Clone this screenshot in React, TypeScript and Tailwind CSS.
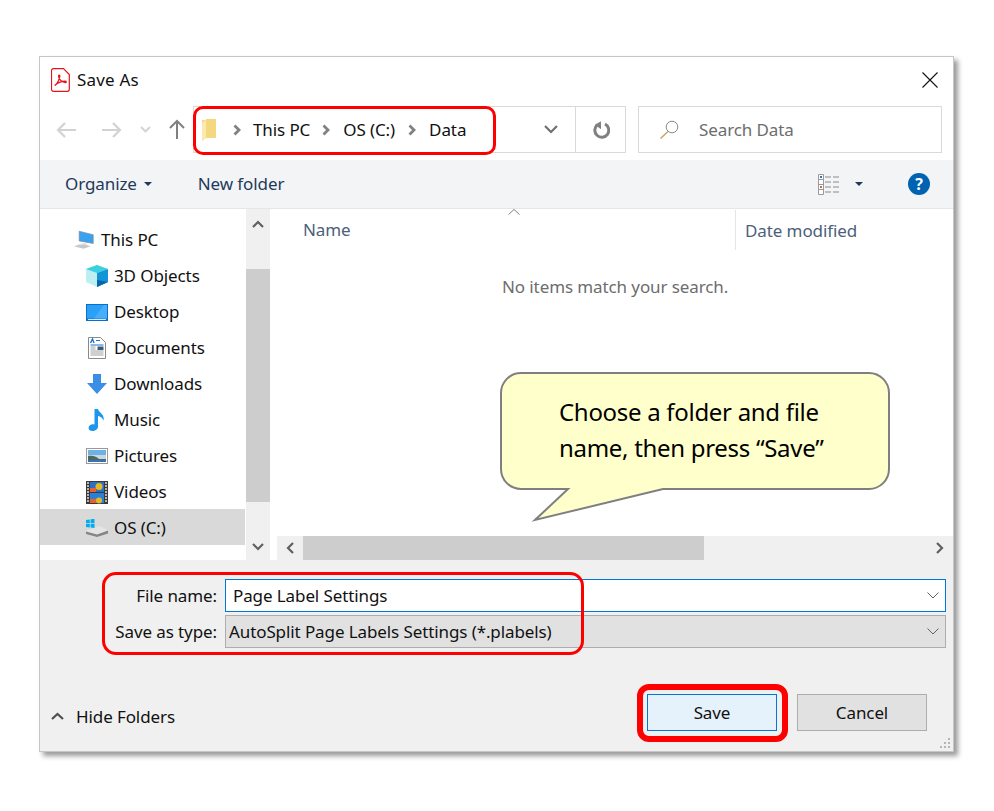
import { ReactNode } from "react";

const Chev = ({ className = "" }: { className?: string }) => (
  <svg width="8" height="12" viewBox="0 0 8 12" className={className}>
    <path d="M1.500 1.500 6 6l-4.500 4.500" fill="none" stroke="#808080" strokeWidth="2.800" />
  </svg>
);

function PdfIcon() {
  return (
    <svg width="19" height="24" viewBox="0 0 19 24">
      <path d="M2.500.7h10l5.800 5.800v14.800a2 2 0 0 1-2 2H2.500a2 2 0 0 1-2-2V2.700a2 2 0 0 1 2-2z" fill="#fff" stroke="#e8141c" strokeWidth="1.200" />
      <path d="M3.800 17.500c2.200-1.200 4.500-5.800 5-9.300.1-1.300-1.100-1.500-1.200-.3-.2 2.700 2.800 6.400 6.600 6.600 1.500.1 1.400-1.300-.1-1.300-3.100 0-8.200 1.500-10.300 4.300z" fill="none" stroke="#e8141c" strokeWidth="1.300" />
    </svg>
  );
}

function PcIcon() {
  return (
    <svg width="25" height="22" viewBox="0 0 25 22">
      <path d="M7 1l16 4v10L7 12z" fill="#3aa0f0" stroke="#7a8a99" strokeWidth=".7" />
      <path d="M1 18l10-3 9 3-8 3z" fill="#c4c8cc" />
      <path d="M5 16l9-2 3 1-9 2z" fill="#e4e6e8" />
    </svg>
  );
}

function CubeIcon() {
  return (
    <svg width="22" height="22" viewBox="0 0 22 22">
      <path d="M11 0l11 4v13l-11 5-11-5V4z" fill="#bdeef2" />
      <path d="M11 0l11 4-11 4L0 4z" fill="#3bd0e0" />
      <path d="M11 8l11-4v13l-11 5z" fill="#1195d8" />
      <path d="M11 15l11 2-11 5z" fill="#0b66a8" />
    </svg>
  );
}

function DesktopIcon() {
  return (
    <svg width="22" height="17" viewBox="0 0 22 17">
      <rect width="22" height="17" fill="#0b6fc8" />
      <rect x="1" y="1" width="20" height="13.500" fill="#2ba0f7" />
      <path d="M8 14.500 18 1h3v13.500z" fill="#49aef9" />
      <rect x="2" y="15" width="18" height="1" fill="#cfe7fb" />
    </svg>
  );
}

function DocIcon() {
  return (
    <svg width="18" height="22" viewBox="0 0 18 22">
      <path d="M.5.500h12l5 5v16H.5z" fill="#fff" stroke="#8a8a8a" />
      <path d="M2.500 6 4.500 2 6 6" fill="none" stroke="#1a73d2" strokeWidth="1.400" />
      <path d="M8 3.500h4M2.500 8h13" stroke="#1a73d2" />
      <path d="M2.500 10h5M2.500 12h5M2.500 14h13M2.500 16h13M2.500 18h13" stroke="#a0a0a0" />
      <rect x="9.500" y="9.500" width="6" height="3.500" fill="#3a5a80" />
    </svg>
  );
}

function DownloadIcon() {
  return (
    <svg width="20" height="20" viewBox="0 0 20 20">
      <path d="M6 0h8v9h6L10 20 0 9h6z" fill="#3b8ee6" />
    </svg>
  );
}

function MusicIcon() {
  return (
    <svg width="18" height="22" viewBox="0 0 18 22">
      <path d="M6.500 0h3.500c.5 3.500 7 5 5.500 11.500-1-2.500-3-4-5.500-4.500V17.500c0 2.800-3 4.500-5.500 4.500-3.500 0-5-3-3-5.200 1.200-1.300 3-1.800 5-1.300z" fill="#1e96ee" />
    </svg>
  );
}

function PicturesIcon() {
  return (
    <svg width="22" height="16" viewBox="0 0 22 16">
      <rect x=".5" y=".5" width="21" height="15" fill="#fff" stroke="#9a9a9a" />
      <rect x="2" y="2" width="18" height="5" fill="#6fb0e8" />
      <rect x="2" y="7" width="18" height="4" fill="#c8d8e0" />
      <path d="M2 8c5-1 9 1 11 3h7v3H2z" fill="#4a6a60" />
      <rect x="2" y="12" width="18" height="2" fill="#3a70b8" />
    </svg>
  );
}

function VideosIcon() {
  return (
    <svg width="22" height="23" viewBox="0 0 22 23">
      <rect width="22" height="23" fill="#3a3a3a" />
      <rect x="4" y="1" width="14" height="10" fill="#2a70c8" />
      <rect x="4" y="12" width="14" height="10" fill="#2a80d8" />
      <rect x="4" y="7" width="6" height="4" fill="#e8602a" />
      <rect x="4" y="18" width="6" height="4" fill="#e8602a" />
      <circle cx="13" cy="5.500" r="3.500" fill="#e8b820" />
      <circle cx="13" cy="19.500" r="3" fill="#e8b820" />
      <path d="M1 2h2M1 5h2M1 8h2M1 11h2M1 14h2M1 17h2M1 20h2M19 2h2M19 5h2M19 8h2M19 11h2M19 14h2M19 17h2M19 20h2" stroke="#e0e0e0" strokeWidth="1.500" />
    </svg>
  );
}

function DriveIcon() {
  return (
    <svg width="22" height="18" viewBox="0 0 22 18">
      <path d="M0 12l13-5 9 4v3l-11 4-11-3z" fill="#e4e4e4" />
      <path d="M0 12.500l11 3 11-4v3l-11 3.500-11-3z" fill="#858585" />
      <path d="M0 1l3.800-.6V4H0zM4.600.3 8.500-.2V4H4.600zM0 4.800h3.800v3.600L0 8zM4.600 4.800h3.900V9l-3.900-.5z" fill="#00adef" />
    </svg>
  );
}

const navItems: { label: string; icon: ReactNode; selected?: boolean; top?: boolean }[] = [
  { label: "This PC", icon: <PcIcon />, top: true },
  { label: "3D Objects", icon: <CubeIcon /> },
  { label: "Desktop", icon: <DesktopIcon /> },
  { label: "Documents", icon: <DocIcon /> },
  { label: "Downloads", icon: <DownloadIcon /> },
  { label: "Music", icon: <MusicIcon /> },
  { label: "Pictures", icon: <PicturesIcon /> },
  { label: "Videos", icon: <VideosIcon /> },
  { label: "OS (C:)", icon: <DriveIcon />, selected: true },
];

function ArrowH({ flip, color }: { flip?: boolean; color: string }) {
  return (
    <svg width="20" height="16" viewBox="0 0 20 16" className={flip ? "scale-x-[-1]" : ""}>
      <path d="M20 8H2M9 1 2 8l7 7" fill="none" stroke={color} strokeWidth="2.200" />
    </svg>
  );
}

const ThinChevron = () => (
  <svg width="12" height="7" viewBox="0 0 12 7">
    <path d="M.5.500 6 6 11.500.500" fill="none" stroke="#606060" />
  </svg>
);

export default function App() {
  return (
    <div className="min-h-[811px] bg-white pt-[56px] pl-[39px] font-['Noto_Sans',sans-serif] text-[17px] tracking-[-0.1px] text-[#111]">
      <div className="relative flex h-[696px] w-[915px] flex-col border border-[#c6c6c6] bg-white shadow-[4px_4px_5px_rgba(0,0,0,0.4)]">
        {/* title bar */}
        <div className="flex h-[46px] shrink-0 items-center pl-[11px] pr-[15px]">
          <PdfIcon />
          <span className="ml-[7px] tracking-[0.2px] text-[#111]">Save As</span>
          <svg width="16" height="16" viewBox="0 0 16 16" className="ml-auto">
            <path d="M.5.500l15 15M15.500.500l-15 15" stroke="#111" strokeWidth="1.100" />
          </svg>
        </div>

        {/* address row */}
        <div className="flex h-[57px] shrink-0 items-start pt-[3px]">
          <div className="flex h-[47px] w-[153px] items-center pl-[16px]">
            <ArrowH color="#d2d2d2" />
            <span className="ml-[26px]"><ArrowH flip color="#d2d2d2" /></span>
            <svg width="11" height="7" viewBox="0 0 11 7" className="ml-[18px]">
              <path d="M1 1l4.500 4.500L10 1" fill="none" stroke="#d2d2d2" strokeWidth="1.800" />
            </svg>
            <svg width="16" height="21" viewBox="0 0 16 21" className="ml-[18px]">
              <path d="M8 20V2M1 9l7-7 7 7" fill="none" stroke="#808080" strokeWidth="2" />
            </svg>
          </div>
          <div className="flex h-[47px] w-[433px] items-center border border-[#d9d9d9]">
            <svg width="15" height="22" viewBox="0 0 15 22" className="ml-[8px]">
              <path d="M0 1h4v-1h10v19H4l-4 3z" fill="#f5d77f" />
              <path d="M0 4l4-3v18l-4 3z" fill="#fbe9ad" />
            </svg>
            <Chev className="ml-[16px]" />
            <span className="ml-[12px]">This PC</span>
            <Chev className="ml-[12px]" />
            <span className="ml-[13px]">OS (C:)</span>
            <Chev className="ml-[13px]" />
            <span className="ml-[13px]">Data</span>
            <svg width="14" height="9" viewBox="0 0 14 9" className="ml-auto mr-[17px]">
              <path d="M1 1l6 6 6-6" fill="none" stroke="#707070" strokeWidth="2.200" />
            </svg>
            <div className="flex h-full w-[50px] items-center justify-center border-l border-[#d9d9d9]">
              <svg width="18" height="18" viewBox="0 0 18 18">
                <path d="M5.500 3.700A7 7 0 1 0 13 3" fill="none" stroke="#808080" strokeWidth="3" />
                <path d="M9 .2v8L3 3.800z" fill="#808080" />
              </svg>
            </div>
          </div>
          <div className="ml-[12px] flex h-[47px] w-[304px] items-center border border-[#d9d9d9] text-[#6d6d6d]">
            <svg width="19" height="19" viewBox="0 0 19 19" className="ml-[21px]">
              <circle cx="12" cy="7" r="5.800" fill="none" stroke="#8a8a8a" />
              <path d="M8 11.500.5 18.500" stroke="#c89a58" strokeWidth="1.200" />
            </svg>
            <span className="ml-[20px]">Search Data</span>
          </div>
        </div>

        {/* toolbar */}
        <div className="flex h-[49px] shrink-0 items-center border-b border-[#e6e6e6] bg-[#f3f4f6] pl-[25px] text-[#1e395b]">
          <span>Organize</span>
          <span className="ml-[7px] h-0 w-0 border-x-[4px] border-t-[4px] border-x-transparent border-t-[#1e395b]" />
          <span className="ml-[46px]">New folder</span>
          <svg width="22" height="21" viewBox="0 0 22 21" className="ml-auto">
            <path d="M.5.500h5v20h-5zM.5 5.500h5M.5 10.500h5M.5 15.500h5" fill="#fff" stroke="#9a9a9a" />
            <path d="M7 3h6M15 3h6M7 8h6M15 8h6M7 13h6M15 13h6M7 18h6M15 18h6" stroke="#8a8a8a" />
            <rect x="2" y="2" width="2" height="2" fill="#3a70b8" />
            <rect x="2" y="12" width="2" height="2" fill="#d8702a" />
          </svg>
          <span className="ml-[15px] h-0 w-0 border-x-[4px] border-t-[4px] border-x-transparent border-t-[#1e395b]" />
          <div className="ml-[45px] mr-[23px] flex h-[22px] w-[22px] items-center justify-center rounded-full bg-[#0063b1] text-[16px] font-bold leading-none text-white">?</div>
        </div>

        {/* main */}
        <div className="flex h-[351px] shrink-0">
          <div className="w-[205px] shrink-0 pt-[12px]">
            {navItems.map((item) => (
              <div key={item.label} className={`flex h-[36px] items-center pt-[2px] ${item.selected ? "bg-[#d9d9d9]" : ""} ${item.top ? "pl-[33px]" : "pl-[46px]"}`}>
                <span className="flex w-[22px] shrink-0 justify-center">{item.icon}</span>
                <span className="ml-[6px]">{item.label}</span>
              </div>
            ))}
          </div>
          <div className="ml-px flex w-[24px] shrink-0 flex-col bg-[#f0f0f0]">
            <div className="flex h-[60px] items-start justify-center pt-[11px]">
              <svg width="12" height="8" viewBox="0 0 12 8"><path d="M1 7l5-5 5 5" fill="none" stroke="#606060" strokeWidth="2.200" /></svg>
            </div>
            <div className="h-[233px] bg-[#cdcdcd]" />
            <div className="flex flex-1 items-end justify-center pb-[9px]">
              <svg width="12" height="8" viewBox="0 0 12 8"><path d="M1 1l5 5 5-5" fill="none" stroke="#606060" strokeWidth="2.200" /></svg>
            </div>
          </div>
          <div className="ml-[7px] flex min-w-0 flex-1 flex-col">
            <div className="relative flex h-[41px] shrink-0 items-center pt-px text-[#4c607a]">
              <span className="ml-[26px] w-[432px]">Name</span>
              <svg width="12" height="6" viewBox="0 0 12 6" className="absolute left-[231px] top-0">
                <path d="M.5 5.500 6 .5l5.500 5" fill="none" stroke="#808080" />
              </svg>
              <div className="h-full border-l border-[#e5e5e5] pl-[9px]">
                <span className="leading-[41px]">Date modified</span>
              </div>
            </div>
            <div className="flex-1 pl-[225px] pt-[24px] text-[#6d6d6d]">No items match your search.</div>
            <div className="flex h-[24px] shrink-0 bg-[#f0f0f0]">
              <div className="flex w-[26px] items-center justify-center">
                <svg width="8" height="12" viewBox="0 0 8 12"><path d="M7 1 2 6l5 5" fill="none" stroke="#606060" strokeWidth="2.200" /></svg>
              </div>
              <div className="w-[401px] bg-[#cdcdcd]" />
              <div className="flex flex-1 items-center justify-end pr-[9px]">
                <svg width="8" height="12" viewBox="0 0 8 12"><path d="M1 1l5 5-5 5" fill="none" stroke="#606060" strokeWidth="2.200" /></svg>
              </div>
            </div>
          </div>
        </div>

        {/* footer */}
        <div className="relative flex flex-1 flex-col bg-[#f0f0f0]">
          <div className="mt-[19px] flex h-[33px] items-center">
            <span className="w-[177px] text-right">File name:</span>
            <div className="ml-[8px] flex h-full w-[721px] items-center justify-between border border-[#0078d7] bg-white pl-[7px] pr-[6px]">
              <span>Page Label Settings</span>
              <ThinChevron />
            </div>
          </div>
          <div className="mt-[3px] flex h-[33px] items-center">
            <span className="w-[177px] text-right">Save as type:</span>
            <div className="ml-[8px] flex h-full w-[721px] items-center justify-between border border-[#adadad] bg-[#e1e1e1] pl-[3px] pr-[6px]">
              <span>AutoSplit Page Labels Settings (*.plabels)</span>
              <ThinChevron />
            </div>
          </div>
          <div className="mt-auto mb-[20px] flex h-[37px] items-center">
            <svg width="13" height="8" viewBox="0 0 13 8" className="ml-[11px] mt-[7px]">
              <path d="M1 7l5.500-5L12 7" fill="none" stroke="#505050" strokeWidth="2.200" />
            </svg>
            <span className="ml-[12px] mt-[8px]">Hide Folders</span>
            <button className="ml-auto h-[37px] w-[130px] border border-[#0078d7] bg-[#e5f1fb] pt-px">Save</button>
            <button className="ml-[20px] mr-[26px] h-[37px] w-[130px] border border-[#adadad] bg-[#e1e1e1] pt-px">Cancel</button>
          </div>
          <svg width="12" height="12" viewBox="0 0 12 12" className="absolute bottom-[2px] right-[2px]">
            <path d="M9 1h2v2H9zM5 5h2v2H5zM9 5h2v2H9zM1 9h2v2H1zM5 9h2v2H5zM9 9h2v2H9z" fill="#b5b5b5" />
          </svg>
        </div>

        {/* annotations on top of the dialog */}
        <div className="absolute left-[153px] top-[49px] h-[49px] w-[303px] rounded-[10px] border-[3px] border-[#f00]" />
        <div className="absolute left-[62px] top-[515px] h-[83px] w-[482px] rounded-[14px] border-[3px] border-[#f00]" />
        <div className="absolute left-[597px] top-[627px] h-[58px] w-[151px] rounded-[12px] border-[6px] border-[#f00]" />

        <div className="absolute left-[460px] top-[315px] h-[150px] w-[392px] text-[24px] leading-[36px] tracking-[-0.3px] text-black">
          <svg width="392" height="150" viewBox="0 0 392 150" className="absolute inset-0">
            <path d="M21 1h348a20 20 0 0 1 20 20v76a20 20 0 0 1-20 20H163L35 148 68 117H21a20 20 0 0 1-20-20V21A20 20 0 0 1 21 1z" fill="#ffffcc" stroke="#7f7f7f" strokeWidth="2" />
          </svg>
          <div className="relative pl-[59px] pt-[22px]">
            Choose a folder and file
            <br />
            name, then press “Save”
          </div>
        </div>
      </div>
    </div>
  );
}
